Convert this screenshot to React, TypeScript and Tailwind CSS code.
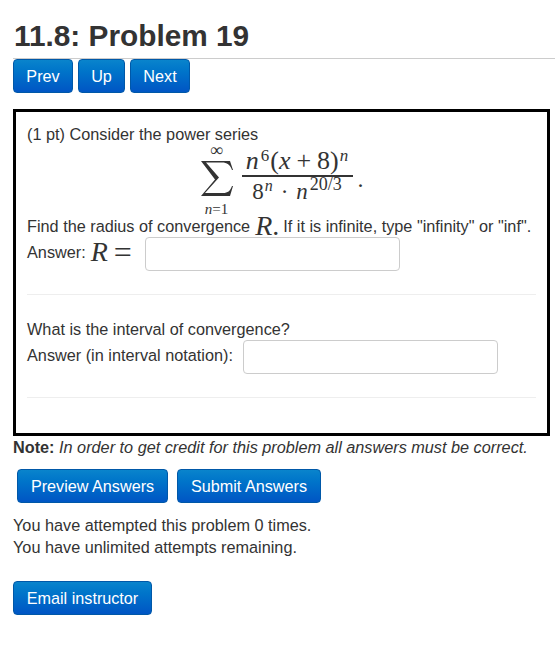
import React from 'react';

const btn =
  'inline-flex h-[34px] items-center justify-center rounded-[4px] border border-[#0058a8] bg-gradient-to-b from-[#0a84cc] to-[#0055c4] text-[16.2px] text-white';
const serif = "font-['Liberation_Serif',serif]";

function Sum() {
  return (
    <div className={`flex h-[71px] items-center justify-center ${serif} text-[#333]`}>
      <div className="flex w-[34px] flex-col items-center">
        <span className="text-[18px] leading-[8px]">∞</span>
        <svg width="34" height="37" viewBox="0 0 34 37" className="mb-[5px] mt-[6px]">
          <path d="M1 1H30L33 10H32C30 4.500 27 2.500 22 2.500H6L19 17.500L5 33H23C28 33 30 31 32 26H33L30 36H1L15 19.500Z" fill="#333" />
        </svg>
        <span className="whitespace-nowrap text-[15px] leading-[15px]">
          <i>n</i>=1
        </span>
      </div>
      <div className="mb-[11px] ml-[8px] flex w-[111px] flex-col items-center">
        <div className="h-[32px] w-full whitespace-nowrap border-b-2 border-[#333] text-center text-[26px] leading-[32px]">
          <i>n</i>
          <sup className="ml-[2px] text-[17px]">6</sup>
          <span className="ml-[1px]">(</span>
          <i>x</i>
          <span className="mx-[6px]">+</span>
          <span>8</span>
          <span>)</span>
          <sup className="ml-[1px] text-[17px] italic">n</sup>
        </div>
        <div className="h-[30px] whitespace-nowrap text-[23px] leading-[30px]">
          <span>8</span>
          <sup className="ml-[1px] text-[16px] italic">n</sup>
          <span className="mx-[8px]">·</span>
          <i>n</i>
          <sup className="ml-[2px] text-[18px]">20/3</sup>
        </div>
      </div>
      <span className="mb-[6px] ml-[5px] text-[24px]">.</span>
    </div>
  );
}

export default function App() {
  return (
    <div className="h-[647px] w-[555px] overflow-hidden bg-white pl-[13px] font-['Liberation_Sans',sans-serif] text-[16.25px] text-[#333]">
      <h1 className="mt-[18px] h-[41px] whitespace-nowrap border-b border-[#ccc] pl-[1px] text-[29.8px] font-bold leading-[36px]">11.8: Problem 19</h1>
      <div className="flex gap-[5px]">
        <div className={`${btn} w-[60px]`}>Prev</div>
        <div className={`${btn} w-[47px]`}>Up</div>
        <div className={`${btn} w-[60px]`}>Next</div>
      </div>
      <div className="mt-[16px] h-[327px] w-[537px] border-[3px] border-black px-[11px] pt-[11px] leading-[22px]">
        <div className="h-[23px]">(1 pt) Consider the power series</div>
        <Sum />
        <div className="flex h-[17px] items-center whitespace-nowrap">
          Find the radius of convergence
          <i className={`${serif} ml-[5px] text-[28px] leading-none`}>R</i>
          <span className={`${serif} text-[28px] leading-none`}>.</span>
          <span className="ml-[4px]">If it is infinite, type "infinity" or "inf".</span>
        </div>
        <div className="mt-[2px] flex h-[35px] items-center">
          <span className="pb-[4px]">Answer:</span>
          <i className={`${serif} ml-[5px] pb-[4px] text-[28px] leading-none`}>R</i>
          <span className={`${serif} ml-[6px] pb-[4px] text-[32px] leading-none`}>=</span>
          <div className="ml-[13px] h-[34px] w-[255px] rounded-[4px] border border-[#ccc] bg-white" />
        </div>
        <div className="mt-[23px] border-t border-[#eee]" />
        <div className="mt-[23px] h-[21px]">What is the interval of convergence?</div>
        <div className="flex h-[35px] items-center">
          <span className="pb-[4px]">Answer (in interval notation):</span>
          <div className="ml-[10px] h-[34px] w-[255px] rounded-[4px] border border-[#ccc] bg-white" />
        </div>
        <div className="mt-[23px] border-t border-[#eee]" />
      </div>
      <p className="h-[23px] whitespace-nowrap leading-[22px]">
        <b>Note:</b> <i>In order to get credit for this problem all answers must be correct.</i>
      </p>
      <div className="mt-[10px] flex gap-[9px] pl-[4px]">
        <div className={`${btn} w-[151px]`}>Preview Answers</div>
        <div className={`${btn} w-[144px]`}>Submit Answers</div>
      </div>
      <p className="mt-[11px] leading-[22px]">You have attempted this problem 0 times.</p>
      <p className="leading-[22px]">You have unlimited attempts remaining.</p>
      <div className={`${btn} mt-[23px] w-[139px]`}>Email instructor</div>
    </div>
  );
}
